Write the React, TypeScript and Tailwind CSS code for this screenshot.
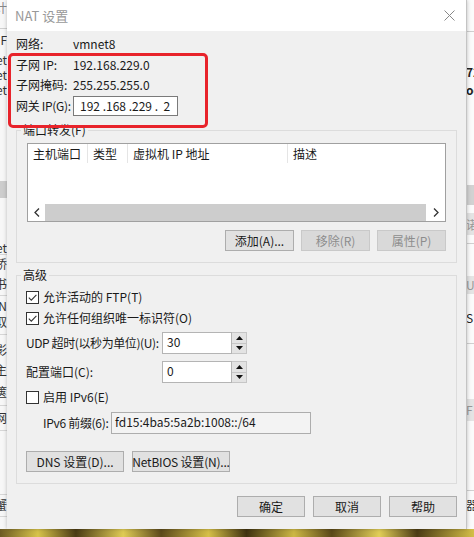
import React from "react";

function CheckBox({ checked }: { checked?: boolean }) {
  return (
    <span className="w-[13px] h-[13px] border border-[#333] bg-white flex items-center justify-center shrink-0">
      {checked && (
        <svg width="11" height="11" viewBox="0 0 11 11" fill="none">
          <path d="M1.8 5.6 L4.3 8.1 L9.4 2.9" stroke="#333" strokeWidth="1.1" />
        </svg>
      )}
    </span>
  );
}

function Btn({
  children,
  disabled,
  className = "",
}: {
  children: React.ReactNode;
  disabled?: boolean;
  className?: string;
}) {
  return (
    <button
      className={`h-[21px] border text-[12px] leading-none whitespace-nowrap flex items-center justify-center shrink-0 ${
        disabled
          ? "bg-[#d9d9d9] border-[#c9c9c9] text-[#8d8d8d]"
          : "bg-[#e1e1e1] border-[#adadad] text-[#1a1a1a]"
      } ${className}`}
    >
      {children}
    </button>
  );
}

function Spin({ value }: { value: string }) {
  return (
    <div className="flex h-[22px] w-[85px] shrink-0">
      <div className="flex-1 bg-white border border-[#b4b4b4] pl-[4px] text-[12px] leading-[17px]">
        {value}
      </div>
      <div className="w-[15px] flex flex-col border border-l-0 border-[#c6c6c6] bg-[#e3e3e3]">
        <div className="flex-1 flex items-center justify-center border-b border-[#c6c6c6]">
          <svg width="7" height="4" viewBox="0 0 7 4">
            <path d="M0 4 L3.5 0 L7 4 Z" fill="#111" />
          </svg>
        </div>
        <div className="flex-1 flex items-center justify-center">
          <svg width="7" height="4" viewBox="0 0 7 4">
            <path d="M0 0 L3.5 4 L7 0 Z" fill="#111" />
          </svg>
        </div>
      </div>
    </div>
  );
}

const leftBits = [
  { y: 2, t: "计", c: "text-[#888]" },
  { y: 34, t: "F", c: "text-[#333]" },
  { y: 54, t: "et", c: "text-[#333]" },
  { y: 69, t: "et", c: "text-[#333]" },
  { y: 84, t: "et", c: "text-[#333]" },
  { y: 242, t: "et", c: "text-[#333]" },
  { y: 258, t: "桥", c: "text-[#333]" },
  { y: 278, t: "书", c: "text-[#333]" },
  { y: 300, t: "N", c: "text-[#333]" },
  { y: 316, t: "取", c: "text-[#333]" },
  { y: 344, t: "影", c: "text-[#333]" },
  { y: 364, t: "主", c: "text-[#333]" },
  { y: 386, t: "篋", c: "text-[#333]" },
  { y: 412, t: "网", c: "text-[#333]" },
  { y: 499, t: "蟹", c: "text-[#333]" },
];

const rightBits = [
  { y: 66, t: "72", c: "text-[#222] font-bold" },
  { y: 84, t: "oc", c: "text-[#222] font-bold" },
  { y: 219, t: "诺", c: "text-[#999]" },
  { y: 279, t: "Ui", c: "text-[#999]" },
  { y: 312, t: "S", c: "text-[#222]" },
  { y: 404, t: "F", c: "text-[#999]" },
  { y: 499, t: "器", c: "text-[#333]" },
];

export default function App() {
  return (
    <div className="relative w-[474px] h-[537px] overflow-hidden bg-[#f4f4f4] font-['Noto_Sans_CJK_SC',sans-serif] text-[#1a1a1a]">
      {/* background windows */}
      <div className="absolute left-0 top-0 w-[7px] h-[529px] overflow-hidden bg-[#f7f7f7]">
        <div className="absolute left-0 right-0 top-[28px] h-px bg-[#cfcfcf]" />
        <div className="absolute left-0 right-0 top-[181px] h-[17px] bg-[#cdcdcd]" />
        <div className="absolute left-0 right-0 top-[254px] h-px bg-[#d6d6d6]" />
        <div className="absolute left-0 right-0 top-[295px] h-px bg-[#d6d6d6]" />
        <div className="absolute left-0 right-0 top-[334px] h-px bg-[#d6d6d6]" />
        <div className="absolute left-0 right-0 top-[405px] h-px bg-[#d6d6d6]" />
        <div className="absolute left-0 right-0 top-[430px] h-px bg-[#d6d6d6]" />
        <div className="absolute left-0 right-0 top-[494px] h-px bg-[#d6d6d6]" />
        <div className="absolute left-0 right-0 top-[516px] h-px bg-[#d6d6d6]" />
        {leftBits.map((b) => (
          <span
            key={b.y}
            className={`absolute right-0 text-[12px] leading-[12px] whitespace-nowrap ${b.c}`}
            style={{ top: b.y }}
          >
            {b.t}
          </span>
        ))}
      </div>
      <div className="absolute right-0 top-0 w-[8px] h-[529px] overflow-hidden bg-[#fbfbfb]">
        <div className="absolute left-0 right-0 top-[31px] h-px bg-[#cfcfcf]" />
        <div className="absolute left-0 right-0 top-[185px] h-[20px] bg-[#d2d2d2]" />
        <div className="absolute left-0 right-0 top-[213px] h-[22px] bg-[#e4e4e4]" />
        <div className="absolute left-0 right-0 top-[243px] h-px bg-[#d0d0d0]" />
        <div className="absolute left-0 right-0 top-[276px] h-[18px] bg-[#e4e4e4]" />
        <div className="absolute left-0 right-0 top-[343px] h-px bg-[#d0d0d0]" />
        <div className="absolute left-0 right-0 top-[399px] h-[22px] bg-[#e4e4e4]" />
        <div className="absolute left-0 right-0 top-[490px] h-px bg-[#d0d0d0]" />
        {rightBits.map((b) => (
          <span
            key={b.y}
            className={`absolute left-0 text-[12px] leading-[12px] whitespace-nowrap ${b.c}`}
            style={{ top: b.y }}
          >
            {b.t}
          </span>
        ))}
      </div>
      <div className="absolute left-0 right-0 bottom-0 h-[8px] bg-[linear-gradient(90deg,#6b5a23,#d8c44a_8%,#4a3b14_16%,#e0cc55_26%,#5c4a1b_34%,#d6c048_44%,#3f3210_52%,#cdb845_62%,#5a4818_70%,#e2cf58_80%,#4b3c15_88%,#d4bf47)]" />

      {/* dialog */}
      <div className="absolute left-[7px] top-0 w-[460px] h-[529px] bg-[#f0f0f0] border-r border-[#c4c4c4] shadow-[0_0_4px_rgba(0,0,0,0.25)] flex flex-col">
        <div className="h-[31px] bg-white flex items-center justify-between pl-[8px] pr-[11px] shrink-0">
          <span className="text-[13px] text-[#999]">NAT 设置</span>
          <svg width="11" height="11" viewBox="0 0 11 11">
            <path d="M0.5 0.5 L10.5 10.5 M10.5 0.5 L0.5 10.5" stroke="#888" strokeWidth="1" />
          </svg>
        </div>

        <div className="relative flex-1 px-[9px] text-[12px]">
          <div className="mt-[3px] h-[20px] flex items-center">
            <span className="w-[57px]">网络:</span>
            <span>vmnet8</span>
          </div>
          <div className="mt-[1px] h-[20px] flex items-center">
            <span className="w-[57px]">子网 IP:</span>
            <span>192.168.229.0</span>
          </div>
          <div className="h-[20px] flex items-center">
            <span className="w-[57px]">子网掩码:</span>
            <span>255.255.255.0</span>
          </div>
          <div className="mt-[1px] h-[20px] flex items-center">
            <span className="w-[57px] whitespace-nowrap tracking-[-0.3px]">网关 IP(G):</span>
            <div className="w-[105px] h-[20px] bg-white border border-[#7a7a7a] pl-[6px] flex items-center whitespace-pre">
              192 .168 .229 .  2
            </div>
          </div>

          <fieldset className="mt-[7px] border border-[#dcdcdc] p-0 m-0">
            <legend className="ml-[4px] px-[2px] leading-[14px]">端口转发(F)</legend>
            <div className="px-[10px] pt-[6px] pb-[11px]">
              <div className="h-[79px] border border-[#a0a0a0] bg-white flex flex-col">
                <div className="h-[19px] flex items-center shrink-0">
                  <span className="w-[60px] h-full pl-[5px] flex items-center border-r border-[#e5e5e5]">主机端口</span>
                  <span className="w-[40px] h-full pl-[5px] flex items-center border-r border-[#e5e5e5]">类型</span>
                  <span className="w-[160px] h-full pl-[5px] flex items-center border-r border-[#e5e5e5]">虚拟机 IP 地址</span>
                  <span className="pl-[5px]">描述</span>
                </div>
                <div className="flex-1" />
                <div className="h-[17px] flex shrink-0">
                  <div className="w-[17px] flex items-center justify-center">
                    <svg width="6" height="9" viewBox="0 0 6 9">
                      <path d="M5 0.5 L1 4.5 L5 8.5" stroke="#333" strokeWidth="1.3" fill="none" />
                    </svg>
                  </div>
                  <div className="flex-1 bg-[#cdcdcd]" />
                  <div className="w-[19px] flex items-center justify-center">
                    <svg width="6" height="9" viewBox="0 0 6 9">
                      <path d="M1 0.5 L5 4.5 L1 8.5" stroke="#333" strokeWidth="1.3" fill="none" />
                    </svg>
                  </div>
                </div>
              </div>
              <div className="mt-[8px] flex justify-end gap-[7px]">
                <Btn className="w-[69px]">添加(A)...</Btn>
                <Btn disabled className="w-[69px]">移除(R)</Btn>
                <Btn disabled className="w-[69px]">属性(P)</Btn>
              </div>
            </div>
          </fieldset>

          <fieldset className="mt-[5px] border border-[#dcdcdc] p-0 m-0">
            <legend className="ml-[4px] px-[2px] leading-[14px]">高级</legend>
            <div className="pl-[9px] pr-[10px] pt-[7px] pb-[11px]">
              <div className="h-[16px] flex items-center gap-[4px]">
                <CheckBox checked />
                <span>允许活动的 FTP(T)</span>
              </div>
              <div className="mt-[5px] h-[16px] flex items-center gap-[4px]">
                <CheckBox checked />
                <span>允许任何组织唯一标识符(O)</span>
              </div>
              <div className="mt-[6px] flex items-center">
                <span className="w-[136px] whitespace-nowrap tracking-[-0.4px]">UDP 超时(以秒为单位)(U):</span>
                <Spin value="30" />
              </div>
              <div className="mt-[7px] flex items-center">
                <span className="w-[136px]">配置端口(C):</span>
                <Spin value="0" />
              </div>
              <div className="mt-[6px] h-[16px] flex items-center gap-[4px]">
                <CheckBox />
                <span>启用 IPv6(E)</span>
              </div>
              <div className="mt-[7px] flex items-center pl-[17px]">
                <span className="w-[68px] whitespace-nowrap tracking-[-0.3px]">IPv6 前缀(6):</span>
                <div className="w-[200px] h-[22px] border border-[#adadad] bg-[#f3f3f3] pl-[3px] leading-[18px] shrink-0">
                  fd15:4ba5:5a2b:1008::/64
                </div>
              </div>
              <div className="mt-[17px] flex gap-[8px]">
                <Btn className="w-[98px]">DNS 设置(D)...</Btn>
                <Btn className="w-[98px] tracking-[-0.2px]">NetBIOS 设置(N)...</Btn>
              </div>
            </div>
          </fieldset>

          <div className="mt-[12px] flex justify-end gap-[8px]">
            <Btn className="w-[68px]">确定</Btn>
            <Btn className="w-[68px]">取消</Btn>
            <Btn className="w-[68px]">帮助</Btn>
          </div>

          <div className="absolute left-[1px] top-[22px] w-[200px] h-[75px] border-[3px] border-[#e8232b] rounded-[5px] pointer-events-none" />
        </div>
      </div>
    </div>
  );
}
